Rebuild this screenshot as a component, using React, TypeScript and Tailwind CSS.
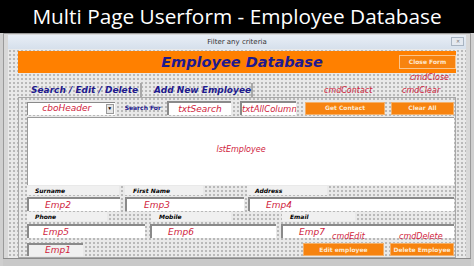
import React from 'react';

const dots = 'bg-[#e9e9e9] bg-[radial-gradient(#b9b9b9_0.8px,transparent_0.9px)] bg-[size:4px_4px]';
const red = 'text-[#d01c3c] italic font-["DejaVu_Sans",sans-serif] whitespace-nowrap';

function TextBox({ text, className, inset = 'pl-[18px]' }: { text: string; className: string; inset?: string }) {
  return (
    <div className={`h-[14px] bg-white border-t-2 border-l-2 border-[#8a8a8a] flex items-center overflow-hidden ${inset} ${className}`}>
      <span className={`${red} text-[9px] leading-none`}>{text}</span>
    </div>
  );
}

function FieldLabel({ text, className }: { text: string; className: string }) {
  return (
    <div className={`h-[9px] bg-[#f0f0f0] flex items-center pl-[8px] ${className}`}>
      <span className="text-[6px] font-bold italic text-black leading-none whitespace-nowrap font-['DejaVu_Sans',sans-serif]">{text}</span>
    </div>
  );
}

function OrangeButton({ text, className }: { text: string; className: string }) {
  return (
    <div className={`h-[13px] bg-[#f7830f] border border-[#f3b06a] flex items-center justify-center ${className}`}>
      <span className="text-[6px] font-bold text-[#fde9d2] leading-none whitespace-nowrap font-['DejaVu_Sans',sans-serif]">{text}</span>
    </div>
  );
}

export default function App() {
  return (
    <div className="w-[474px] h-[266px] bg-black flex flex-col overflow-hidden">
      <div className="h-[33px] shrink-0 flex items-center justify-center text-white text-[20.8px] font-['Open_Sans',sans-serif] leading-none">
        Multi Page Userform - Employee Database
      </div>

      <div className="h-[233px] bg-[#cfcfcf] px-[3px] flex flex-col">
        <div className="h-[225px] border border-[#9a9a9a] border-b-0 bg-[#d8d8d8] px-[4px] pt-[1px] flex flex-col">
          {/* title bar */}
          <div className="h-[14px] shrink-0 bg-gradient-to-b from-[#e8eef6] to-[#d6e0ec] flex items-center relative">
            <span className="flex-1 text-center text-[7px] text-[#333] font-['DejaVu_Sans',sans-serif]">Filter any criteria</span>
            <div className="absolute right-[2px] top-[2px] w-[13px] h-[9px] border border-[#a8b4c2] bg-[#e4e9f0] flex items-center justify-center text-[5px] text-[#777]">✕</div>
          </div>

          {/* dotted body */}
          <div className={`h-[209px] ${dots} px-[10px] pt-[2px] flex flex-col`}>
            <div className="h-[22px] shrink-0 bg-[#ff8000] flex items-center relative">
              <span className="flex-1 text-center text-[14.5px] font-bold italic text-[#1e1a8e] leading-none font-['DejaVu_Sans',sans-serif] pl-[10px]">Employee Database</span>
              <div className="absolute right-[0px] top-[4px] w-[57px] h-[14px] border border-[#fbc48a] bg-[#f7830f] flex items-center justify-center">
                <span className="text-[6px] font-bold text-[#fde9d2] leading-none font-['DejaVu_Sans',sans-serif]">Close Form</span>
              </div>
            </div>

            <div className="h-[9px] shrink-0 flex justify-end items-center pr-[7px]">
              <span className={`${red} text-[8px] leading-none`}>cmdClose</span>
            </div>

            {/* tabs */}
            <div className="h-[15px] shrink-0 flex items-end relative">
              <div className="ml-[13px] w-[111px] h-[14px] border-r-2 border-[#a9a9a9] flex items-center">
                <span className="text-[9px] font-bold italic text-[#1e1a8e] leading-none whitespace-nowrap font-['DejaVu_Sans',sans-serif]">Search / Edit / Delete</span>
              </div>
              <div className="ml-[12px] w-[99px] h-[14px] border-r-2 border-[#a9a9a9] flex items-center">
                <span className="text-[9px] font-bold italic text-[#1e1a8e] leading-none whitespace-nowrap font-['DejaVu_Sans',sans-serif]">Add New Employee</span>
              </div>
              <span className={`${red} text-[8px] leading-none absolute left-[306px] bottom-[2px]`}>cmdContact</span>
              <span className={`${red} text-[8px] leading-none absolute left-[384px] bottom-[2px]`}>cmdClear</span>
            </div>

            {/* panel */}
            <div className="h-[161px] shrink-0 border border-[#a8a8a8] pl-[8px] pr-[1px] pt-[3px] flex flex-col">
              <div className="h-[14px] shrink-0 flex items-center">
                <div className="w-[89px] h-[13px] bg-white border-t border-l border-[#8a8a8a] flex items-center">
                  <span className={`${red} text-[9px] leading-none flex-1 text-center`}>cboHeader</span>
                  <div className="w-[8px] h-[10px] bg-[#e6e6e6] border border-[#9a9a9a] flex items-center justify-center mr-[1px]">
                    <span className="text-[5px] leading-none">▼</span>
                  </div>
                </div>
                <span className="ml-[10px] text-[6px] font-bold text-[#1e1a8e] leading-none whitespace-nowrap font-['DejaVu_Sans',sans-serif]">Search For</span>
                <TextBox text="txtSearch" className="ml-[6px] w-[65px] justify-center" inset="pl-0" />
                <div className="ml-[9px] w-[57px] h-[14px] bg-white border-t-2 border-l-2 border-[#8a8a8a] flex items-center overflow-hidden">
                  <span className={`${red} text-[8.5px] leading-none`}>txtAllColumn</span>
                </div>
                <OrangeButton text="Get Contact" className="ml-[9px] w-[81px]" />
                <OrangeButton text="Clear All" className="ml-[6px] w-[64px]" />
              </div>

              <div className="mt-[2px] h-[68px] shrink-0 bg-white border-t border-l border-[#9a9a9a] flex items-center justify-center pb-[4px]">
                <span className={`${red} text-[8px] leading-none`}>lstEmployee</span>
              </div>

              <div className="flex mt-[1px] shrink-0">
                <FieldLabel text="Surname" className="w-[92px]" />
                <FieldLabel text="First Name" className="ml-[6px] w-[78px]" />
                <FieldLabel text="Address" className="ml-[44px] w-[80px]" />
              </div>
              <div className="flex mt-[2px] shrink-0">
                <TextBox text="Emp2" className="w-[93px]" inset="pl-[16px]" />
                <TextBox text="Emp3" className="ml-[5px] w-[119px]" inset="pl-[17px]" />
                <TextBox text="Emp4" className="ml-[4px] flex-1" inset="pl-[16px]" />
              </div>

              <div className="flex mt-[1px] shrink-0">
                <FieldLabel text="Phone" className="w-[80px]" />
                <FieldLabel text="Mobile" className="ml-[44px] w-[80px]" />
                <FieldLabel text="Email" className="ml-[51px] w-[73px]" />
              </div>
              <div className="flex mt-[3px] shrink-0">
                <TextBox text="Emp5" className="w-[118px]" inset="pl-[14px]" />
                <TextBox text="Emp6" className="ml-[5px] w-[126px]" inset="pl-[16px]" />
                <TextBox text="Emp7" className="ml-[5px] flex-1" inset="pl-[16px]" />
              </div>

              <div className="flex items-end relative mt-[5px] shrink-0">
                <div className="w-[56px] h-[13px] bg-[#f0f0f0] border-t-2 border-l-2 border-[#8a8a8a] flex items-center pl-[16px]">
                  <span className={`${red} text-[9px] leading-none`}>Emp1</span>
                </div>
                <span className={`${red} text-[8px] leading-none absolute left-[305px] -top-[10px]`}>cmdEdit</span>
                <span className={`${red} text-[8px] leading-none absolute left-[372px] -top-[10px]`}>cmdDelete</span>
                <OrangeButton text="Edit employee" className="ml-auto w-[81px]" />
                <OrangeButton text="Delete Employee" className="ml-[6px] w-[64px]" />
              </div>
            </div>
          </div>
        </div>
        <div className="h-[8px] border-t border-[#8a8a8a] bg-[#c9c9c9]" />
      </div>
    </div>
  );
}
